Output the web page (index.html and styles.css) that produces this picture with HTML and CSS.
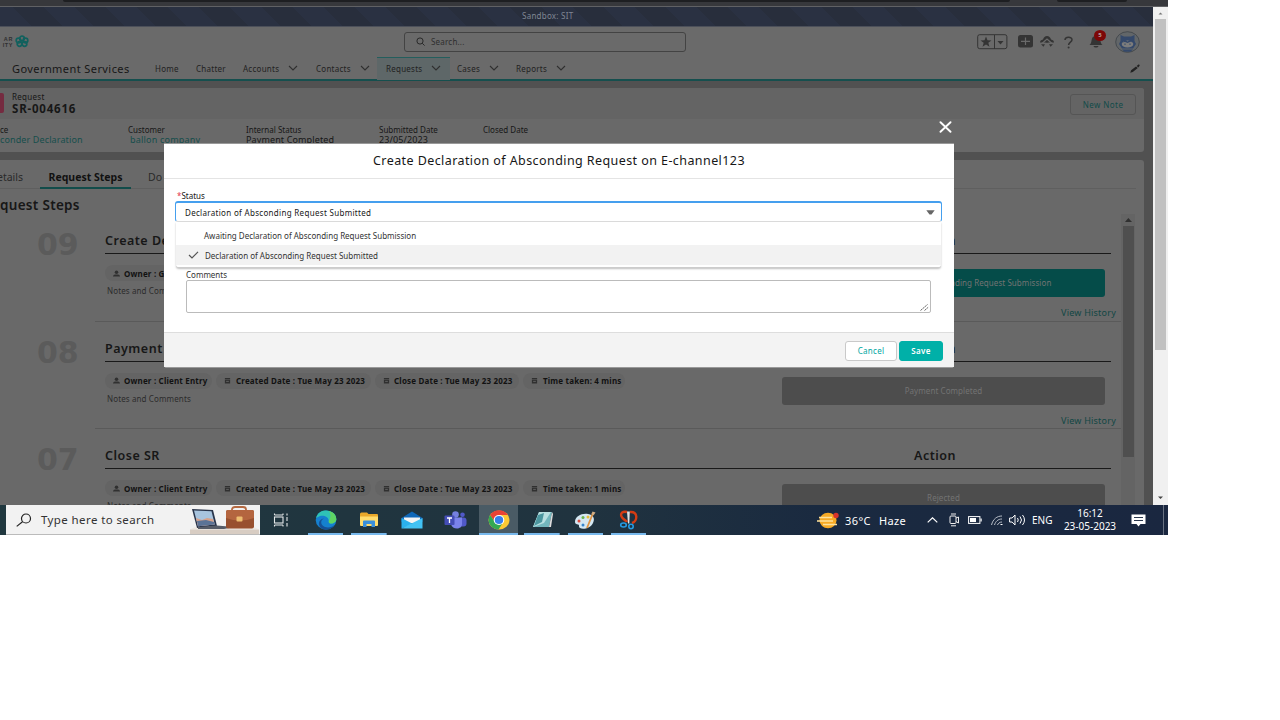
FILE: index.html
```html
<!DOCTYPE html>
<html lang="en">
<head>
    <meta charset="UTF-8">
    <meta name="viewport" content="width=device-width, initial-scale=1.0">
    <title>SR-004616 | Government Services</title>
    <link rel="stylesheet" href="styles.css">
</head>
<body>

<svg class="sprite" width="0" height="0">
    <symbol id="chevron" viewBox="0 0 10 6"><path d="M1 1l4 4 4-4" fill="none" stroke="#303030" stroke-width="1.1"/></symbol>
    <symbol id="user" viewBox="0 0 8 8"><circle cx="4" cy="2.500" r="2"/><path d="M0 7.500c0-2.500 2-2.500 4-2.500s4 0 4 2.500z"/></symbol>
    <symbol id="date" viewBox="0 0 8 8"><path d="M1 1h6v1.500H1zM1 3.200h6V7.500H1z"/><path d="M2.500 5h3" stroke="#777" stroke-width=".8"/></symbol>
</svg>

<div class="screen">
    <div class="browser-bar"><span class="address"></span><span class="profile"></span></div>

    <div class="viewport">
        <div class="app">
            <div class="sandbox"><span>Sandbox: SIT</span></div>

            <header class="header">
                <div class="logo">
                    <div class="logo-text"><span>AR</span><span>ITY</span></div>
                    <svg width="14" height="13" viewBox="0 0 14 13" fill="none" stroke="#11615e" stroke-width="1.700">
                        <circle cx="7" cy="3.500" r="2.300"/><circle cx="10.500" cy="5.500" r="2.300"/><circle cx="9.500" cy="9" r="2.300"/><circle cx="4.500" cy="9" r="2.300"/><circle cx="3.500" cy="5.500" r="2.300"/>
                    </svg>
                </div>
                <div class="search">
                    <svg width="9" height="9" viewBox="0 0 9 9" fill="none" stroke="#292929"><circle cx="4" cy="4" r="3.100"/><path d="M6.200 6.200l2.400 2.400"/></svg>
                    <span>Search...</span>
                </div>
                <div class="tools">
                    <svg width="31" height="16" viewBox="0 0 31 16">
                        <rect x=".7" y=".7" width="29.200" height="14" rx="2" fill="none" stroke="#343434"/>
                        <path d="M17.500 1v14" stroke="#343434"/>
                        <path d="M9 2.500l1.500 3.700 4 .2-3.200 2.400 1.200 4L9 10.500l-3.500 2.300 1.200-4-3.200-2.400 4-.2zM20.500 7h6l-3 3.500z" fill="#343434"/>
                    </svg>
                    <svg width="15" height="13" viewBox="0 0 15 13"><rect width="15" height="12.500" rx="2.500" fill="#343434"/><path d="M7.500 2.500v7.500M3 6.300h9" stroke="#6a6a6a" stroke-width="1.200"/></svg>
                    <svg width="14" height="13" viewBox="0 0 14 13"><path d="M0 7.500Q0 5 3 4.500 4 1 7 1t4 3.500q3 .5 3 3z" fill="#343434"/><path d="M2 8.500L7 4l5 4.500" fill="none" stroke="#6a6a6a" stroke-width="1.300"/><path d="M1 9.200h4l-1.500 2.500zM13 9.200H9l1.500 2.500zM5.500 7.500L7 6l1.500 1.500z" fill="#343434"/></svg>
                    <svg width="9" height="13" viewBox="0 0 9 13"><path d="M1 4C1 .5 8 .3 8 3.700 8 6.200 4.600 6 4.600 9" fill="none" stroke="#343434" stroke-width="1.500"/><circle cx="4.600" cy="11.500" r="1" fill="#343434"/></svg>
                    <div class="bell">
                        <svg width="14" height="13" viewBox="0 0 14 13" fill="#343434"><path d="M.5 10C3 8 2 5 3.500 2.500 5 .5 9 .5 10.500 2.500 12 5 11 8 13.500 10zM4.500 11h5c-.5 2-4.500 2-5 0z"/></svg>
                        <span class="badge">5</span>
                    </div>
                    <svg width="25" height="22" viewBox="0 0 25 22">
                        <ellipse cx="12.500" cy="11" rx="11.800" ry="10.300" fill="#626669" stroke="#3e4347" stroke-width=".8"/>
                        <path d="M5.500 4l3.500 1.500h7L19.500 4v6l1.500 3-3 4.500H7L4 13l1.500-3z" fill="#34486a"/>
                        <ellipse cx="12.500" cy="13" rx="5.800" ry="3.600" fill="#7c7c7c"/>
                        <path d="M7 11.500l3.500-2.500 2 1.500L15 9l3 2.500-2.500-.7-3 1.200-2.500-1z" fill="#34486a"/>
                        <path d="M10 12.500v1.500M15 12.500v1.500" stroke="#34486a"/>
                        <path d="M7 18.500h11l-2.500 2.300h-6z" fill="#34486a"/>
                    </svg>
                </div>
            </header>

            <nav class="nav">
                <span class="app-name">Government Services</span>
                <span class="nav-item">Home</span>
                <span class="nav-item">Chatter</span>
                <span class="nav-item">Accounts <svg width="10" height="6"><use href="#chevron"/></svg></span>
                <span class="nav-item">Contacts <svg width="10" height="6"><use href="#chevron"/></svg></span>
                <span class="nav-item active">Requests <svg width="10" height="6"><use href="#chevron"/></svg></span>
                <span class="nav-item cases">Cases <svg width="10" height="6"><use href="#chevron"/></svg></span>
                <span class="nav-item">Reports <svg width="10" height="6"><use href="#chevron"/></svg></span>
                <svg class="pencil" width="10" height="9" viewBox="0 0 10 9" fill="#222"><path d="M.3 8.700l.8-2.400L6 2.500l1.800 1.500L2.800 8zM6.700 1.900L8.400.6q1.300-.2 1.300.9L8.400 3.400z"/></svg>
            </nav>

            <main class="content">
                <section class="card record">
                    <div class="record-head">
                        <span class="record-icon"></span>
                        <div class="record-title">
                            <p>Request</p>
                            <h1>SR-004616</h1>
                        </div>
                        <span class="new-note">New Note</span>
                    </div>
                    <div class="fields">
                        <div><p>ce</p><a>conder Declaration</a></div>
                        <div><p>Customer</p><a class="company">ballon company</a></div>
                        <div><p>Internal Status</p><b>Payment Completed</b></div>
                        <div><p>Submitted Date</p><b>23/05/2023</b></div>
                        <div><p>Closed Date</p></div>
                    </div>
                </section>

                <section class="card details">
                    <div class="tabs">
                        <span class="tab first">etails</span>
                        <span class="tab selected">Request Steps</span>
                        <span class="tab">Do</span>
                    </div>
                    <h2 class="steps-title">quest Steps</h2>
                    <div class="steps">
                        <div class="step-list">
                            <article class="step">
                                <div class="number">09</div>
                                <div class="step-body">
                                    <div class="step-head"><h3>Create De</h3><h3>Action</h3></div>
                                    <div class="step-row">
                                        <div class="info">
                                            <div class="chips"><span class="chip owner"><svg width="7" height="7"><use href="#user"/></svg>Owner : G</span></div>
                                            <p class="notes">Notes and Com</p>
                                        </div>
                                        <div class="step-action">
                                            <div class="status open">Awaiting Declaration of Absconding Request Submission</div>
                                            <a>View History</a>
                                        </div>
                                    </div>
                                </div>
                            </article>
                            <article class="step">
                                <div class="number">08</div>
                                <div class="step-body">
                                    <div class="step-head"><h3>Payment</h3><h3>Action</h3></div>
                                    <div class="step-row">
                                        <div class="info">
                                            <div class="chips">
                                                <span class="chip owner"><svg width="7" height="7"><use href="#user"/></svg>Owner : Client Entry</span>
                                                <span class="chip created"><svg width="7" height="7"><use href="#date"/></svg>Created Date : Tue May 23 2023</span>
                                                <span class="chip closed"><svg width="7" height="7"><use href="#date"/></svg>Close Date : Tue May 23 2023</span>
                                                <span class="chip taken"><svg width="7" height="7"><use href="#date"/></svg>Time taken: 4 mins</span>
                                            </div>
                                            <p class="notes">Notes and Comments</p>
                                        </div>
                                        <div class="step-action">
                                            <div class="status">Payment Completed</div>
                                            <a>View History</a>
                                        </div>
                                    </div>
                                </div>
                            </article>
                            <article class="step">
                                <div class="number">07</div>
                                <div class="step-body">
                                    <div class="step-head"><h3>Close SR</h3><h3>Action</h3></div>
                                    <div class="step-row">
                                        <div class="info">
                                            <div class="chips">
                                                <span class="chip owner"><svg width="7" height="7"><use href="#user"/></svg>Owner : Client Entry</span>
                                                <span class="chip created"><svg width="7" height="7"><use href="#date"/></svg>Created Date : Tue May 23 2023</span>
                                                <span class="chip closed"><svg width="7" height="7"><use href="#date"/></svg>Close Date : Tue May 23 2023</span>
                                                <span class="chip taken"><svg width="7" height="7"><use href="#date"/></svg>Time taken: 1 mins</span>
                                            </div>
                                            <p class="notes">Notes and Comments</p>
                                        </div>
                                        <div class="step-action">
                                            <div class="status">Rejected</div>
                                        </div>
                                    </div>
                                </div>
                            </article>
                        </div>
                        <div class="inner-scroll">
                            <svg width="14" height="12" viewBox="0 0 14 12"><path d="M4 8l3.300-4L11 8z" fill="#303030"/></svg>
                            <div class="inner-thumb"></div>
                        </div>
                    </div>
                </section>
            </main>
        </div>

        <div class="page-scroll">
            <svg width="15" height="12" viewBox="0 0 15 12"><path d="M5.500 7.500l2-2 2 2z" fill="#777"/></svg>
            <div class="page-thumb"></div>
            <svg class="down" width="15" height="12" viewBox="0 0 15 12"><path d="M5 3.500h5l-2.500 2.500z" fill="#444"/></svg>
        </div>
    </div>

    <!-- Status dialog -->
    <svg class="close" width="13" height="12" viewBox="0 0 13 12" stroke="#fff" stroke-width="1.900" stroke-linecap="round"><path d="M1.500 1.200l10 9.600M11.500 1.200l-10 9.600"/></svg>
    <div class="modal">
        <div class="modal-head">Create Declaration of Absconding Request on E-channel123</div>
        <div class="modal-body">
            <p class="status-label"><i>*</i>Status</p>
            <div class="select">
                <span>Declaration of Absconding Request Submitted</span>
                <svg width="9" height="5" viewBox="0 0 9 5"><path d="M.3.300h8.400L5.500 4.500h-2z" fill="#666"/></svg>
                <div class="dropdown">
                    <div class="option">Awaiting Declaration of Absconding Request Submission</div>
                    <div class="option chosen"><svg width="11" height="8" viewBox="0 0 11 8"><path d="M1 4l3 3 6-6.200" fill="none" stroke="#555" stroke-width="1.200"/></svg>Declaration of Absconding Request Submitted</div>
                </div>
            </div>
            <p class="comments-label">Comments</p>
            <div class="textarea">
                <svg width="9" height="7" viewBox="0 0 9 7" stroke="#555" stroke-width=".9" stroke-dasharray="2 .6"><path d="M.5 6.500L7.500.5M4.500 6.500l4-3.500"/></svg>
            </div>
        </div>
        <div class="modal-foot">
            <span class="btn">Cancel</span>
            <span class="btn save">Save</span>
        </div>
    </div>

    <div class="taskbar">
        <div class="task-search">
            <svg width="16" height="14" viewBox="0 0 16 14" fill="none" stroke="#222" stroke-width="1.200"><circle cx="10" cy="5.500" r="4.500"/><path d="M6.500 8.700L.7 13.400"/></svg>
            <span>Type here to search</span>
            <svg class="art" width="70" height="29" viewBox="0 0 70 29">
                <path d="M0 24.500l4-2h61l4 2z" fill="#eee7df"/><path d="M0 24.500h69V29H0z" fill="#d8cdc3"/>
                <path d="M2 4l21 1 4 16-20 2z" fill="#29344a"/><path d="M4 5.500l17.500.8 3.300 13.200-16.800 1.700z" fill="#a8c4de"/>
                <path d="M6 13l6 2 5-2 6 1 1.500 5.500-16.500 1.700z" fill="#d7a18a"/><path d="M7 16l9-1 8 2 .8 2.500-16.800 1.700z" fill="#5b7396"/>
                <path d="M8 22l19-1.500 17 1.500-10 2H8z" fill="#565c68"/>
                <path d="M42 7V4.500C42 2.500 43.500 2 45 2h8c2 0 3 .8 3 2.500V7" fill="none" stroke="#b56a42" stroke-width="1.800"/>
                <rect x="36" y="5" width="28" height="18.500" rx="2" fill="#98502f"/><path d="M36 7q0-2 2-2h24q2 0 2 2v6q-14 5-28 0z" fill="#b4653f"/>
                <rect x="46.500" y="11.500" width="6" height="5" rx="1" fill="#edbd70"/>
            </svg>
        </div>
        <div class="task-icon view">
            <svg width="16" height="14" viewBox="0 0 16 14" fill="none" stroke="#e4e8e9" stroke-width="1.100"><rect x="1.500" y="4" width="8.500" height="6"/><path d="M1.500 2V.5M10 2V.5M1.500 2h8.500M1.500 12h8.500M1.500 12v1.500M10 12v1.500M14 .5v2M14 4v4M14 10v3.500"/></svg>
        </div>
        <div class="task-icon open">
            <svg width="22" height="20" viewBox="0 0 22 20">
                <ellipse cx="11" cy="10" rx="10.300" ry="9.500" fill="#1580cf"/>
                <path d="M1 8C3 2 7 .5 11 .5c6 0 10.300 4 10.300 8.500 0 3-3 5-6 4.500-2-.5-1.500-2-1.500-3C13.500 7 9 5 5 6z" fill="#2fc2b6"/>
                <path d="M14 1q7 2 7.300 8c0 3-3 5-6 4.500-2-.5-1.500-2-1.500-3 1-1 3-5 .2-9.500z" fill="#5fd463"/>
                <path d="M9 8.500c-5 2-3 9 4 9 3 0 5-1 6.500-2.500-2 4-9 6.500-13.500 3-4-4-2-9 3-9.500z" fill="#155097"/>
            </svg>
        </div>
        <div class="task-icon open">
            <svg width="20" height="16" viewBox="0 0 20 16"><path d="M1 2q0-1.500 1.500-1.500H8L9.500 2H18q1 0 1 1v10H1z" fill="#e9a82a"/><path d="M1 4.500h18V13q0 1-1 1H2q-1 0-1-1z" fill="#ffdc6c"/><path d="M4 15V9.500q0-1 1-1h10q1 0 1 1V15h-3.500v-3h-5v3z" fill="#398fdc"/></svg>
        </div>
        <div class="task-icon">
            <svg width="22" height="18" viewBox="0 0 22 18"><path d="M.5 7L11 .5 21.500 7v4H.5z" fill="#1068b8"/><path d="M3 6.500h16V12H3z" fill="#f4f4f4"/><path d="M.5 7L12 13 .5 17.500z" fill="#2bb1ed"/><path d="M21.500 7L.5 17.500h21z" fill="#42c2f4"/></svg>
        </div>
        <div class="task-icon">
            <svg width="23" height="18" viewBox="0 0 23 18"><circle cx="11.500" cy="3.500" r="3.300" fill="#7580df"/><circle cx="18.500" cy="3.800" r="2.300" fill="#5059c9"/><rect x="14" y="6.500" width="8.500" height="9" rx="3" fill="#5059c9"/><path d="M7 6.500h11v6.500c0 6-10 6-11 0z" fill="#7b83eb"/><rect x=".5" y="4.500" width="10" height="9.500" rx="1" fill="#444db5"/><path d="M3 7h5M5.500 7v5" stroke="#fff" stroke-width="1.300"/></svg>
        </div>
        <div class="task-icon open current">
            <svg width="22" height="20" viewBox="0 0 22 20">
                <ellipse cx="11" cy="10" rx="10.500" ry="9.500" fill="#fcc934"/>
                <path d="M2 5C6-1.500 16-1.500 20 5H11L7 12z" fill="#ea4335"/><path d="M2 5c-4 7 1 14 8.500 14.500L14 14 7 12z" fill="#34a853"/>
                <ellipse cx="11" cy="10" rx="5.300" ry="4.900" fill="#fff"/><ellipse cx="11" cy="10" rx="4.200" ry="3.900" fill="#377fea"/>
            </svg>
        </div>
        <div class="task-icon open">
            <svg width="21" height="18" viewBox="0 0 21 18"><path d="M7 1h13l-3 15H1z" fill="#72b6bd"/><path d="M7 1h12L12 12l-11 4z" fill="#b8dfe1"/><path d="M6 4l6-2-2 9-8 4z" fill="#4b969f"/><path d="M20 1l-3 15h2l2-13z" fill="#ddd"/></svg>
        </div>
        <div class="task-icon open">
            <svg width="22" height="19" viewBox="0 0 22 19"><path d="M1 11C1 5 8 2 14 3c6 1 7 5 5 9-2 5-10 7-13 5-2-1 0-3-2-3.500C2.500 13 1 13 1 11z" fill="#d4e7f2"/><circle cx="5" cy="10" r="1.500" fill="#db4c3f"/><circle cx="9" cy="6.500" r="1.500" fill="#6ab34d"/><circle cx="14" cy="6" r="1.500" fill="#e8bd38"/><circle cx="9" cy="14" r="1.500" fill="#3685cc"/><path d="M19 2l-6 15" stroke="#dc9447" stroke-width="1.800"/><path d="M17.500 3l1-2.500 3 1-2 3z" fill="#d3ad83"/></svg>
        </div>
        <div class="task-icon open">
            <svg width="19" height="20" viewBox="0 0 19 20" fill="none"><path d="M8 2C4 1 1 3 2.500 6.500 4 10 7 10 8 12M11 2c8-1 8 9 2 11" stroke="#d43c13" stroke-width="2.400"/><path d="M8 1.500h2.800l-.5 12H9z" fill="#e2e2e2"/><ellipse cx="4.500" cy="15" rx="2.800" ry="2" stroke="#259be3" stroke-width="1.600"/><ellipse cx="12" cy="16.500" rx="2.200" ry="2.200" stroke="#259be3" stroke-width="1.600"/></svg>
        </div>

        <div class="tray">
            <svg width="23" height="17" viewBox="0 0 23 17"><ellipse cx="11" cy="8.500" rx="8.500" ry="7.800" fill="#f7aa25"/><circle cx="19" cy="3.500" r="2.700" fill="#d6342b"/><path d="M2 5.500h13M0 9h16M6 12.500h14" stroke="#ffe29a" stroke-width="1.300"/></svg>
            <span class="temp">36°C</span>
            <span class="haze">Haze</span>
            <svg class="tray-up" width="11" height="6" viewBox="0 0 11 6" fill="none" stroke="#fff" stroke-width="1.200"><path d="M.7 5.400L5.500.8l4.800 4.600"/></svg>
            <svg width="12" height="14" viewBox="0 0 12 14" fill="none" stroke="#eee"><rect x="2" y="3" width="6" height="7.500" rx="1"/><path d="M3 1h5M3 12.800h5M8 5l2.500-1v6L8 8.500"/></svg>
            <svg class="battery" width="14" height="8" viewBox="0 0 14 8"><rect x=".6" y=".6" width="11.300" height="6.800" fill="none" stroke="#fff"/><path d="M2 2h6v4H2zM12.500 2.500h1.200v3h-1.200z" fill="#fff"/></svg>
            <svg class="wifi" width="12" height="11" viewBox="0 0 12 11" fill="none" stroke="#b8bec7"><path d="M.5 10C2 4 6 1 11 1M3.500 10C4.500 6.500 7 4 11 4M6.500 10c.5-1.500 2-3 4.500-3" /><path d="M9.500 9.500h2" stroke="#fff"/></svg>
            <svg class="sound" width="17" height="12" viewBox="0 0 17 12" fill="none" stroke="#fff"><path d="M.6 4h2.500L6 1v10L3.100 8H.6zM8.500 4q1.500 2 0 4M11 2.500q3 3.500 0 7M13.500 1q4 5 0 10"/></svg>
            <span class="lang">ENG</span>
            <div class="clock"><span>16:12</span><span>23-05-2023</span></div>
            <svg class="note" width="15" height="13" viewBox="0 0 15 13"><path d="M.5.500h14V10H9.500L7.500 12.500 5.500 10H.5z" fill="#fff"/><path d="M3 3.500h9M3 6.500h9" stroke="#2a374d" stroke-width="1"/></svg>
            <span class="show-desktop"></span>
        </div>
    </div>
</div>

</body>
</html>
```
FILE: styles.css
```css
* {
    box-sizing: border-box;
}
body {
    margin: 0;
    background: #fff;
    font-family: "Noto Sans", "Open Sans", sans-serif;
    font-size: 8px;
    color: #171717;
}
p, h1, h2, h3 {
    margin: 0;
}
svg {
    display: block;
    flex: none;
}
.sprite {
    position: absolute;
}
.screen {
    position: relative;
    width: 1168px;
    height: 535px;
    overflow: hidden;
    white-space: nowrap;
}
.browser-bar {
    display: flex;
    height: 7px;
    padding-left: 63px;
    background: #37383c;
    border-bottom: 1px solid #606164;
}
.address, .profile {
    width: 947px;
    height: 2px;
    background: #1e1f22;
    border-radius: 0 0 4px 4px;
}
.profile {
    width: 70px;
    margin-left: 47px;
}
.viewport {
    display: flex;
    height: 498px;
}
.app {
    width: 1153px;
    background: #515151;
    overflow: hidden;
}
.sandbox {
    height: 20px;
    padding-left: 522px;
    line-height: 18px;
    letter-spacing: .25px;
    color: #808794;
    background: repeating-linear-gradient(45deg, #2a3142 0 22px, #282e3c 22px 44px);
    border-bottom: 1px solid #4c505a;
}

/* header */
.header {
    display: flex;
    height: 29px;
    background: #6a6a6a;
}
.logo {
    display: flex;
    width: 404px;
    padding-top: 8px;
}
.logo-text {
    display: flex;
    flex-direction: column;
    align-items: flex-end;
    width: 13px;
    margin-right: 2px;
    padding-top: 1px;
    font-family: "Liberation Sans", sans-serif;
    font-size: 5.500px;
    font-weight: bold;
    line-height: 6px;
    letter-spacing: .6px;
    color: #303030;
}
.search {
    display: flex;
    align-items: center;
    width: 282px;
    height: 20px;
    margin-top: 5px;
    padding: 0 0 1px 11px;
    gap: 6px;
    border: 1px solid #434343;
    border-radius: 3px;
    color: #2e2e2e;
    letter-spacing: .2px;
}
.tools {
    display: flex;
    align-items: center;
    margin-left: 291px;
}
.tools svg:nth-child(2) {
    margin-left: 10px;
}
.tools svg:nth-child(3) {
    margin-left: 7px;
}
.tools svg:nth-child(4) {
    margin: 1px 0 0 10px;
}
.bell {
    position: relative;
    margin: 0 12px 0 16px;
}
.badge {
    position: absolute;
    top: -5px;
    left: 5px;
    width: 12px;
    height: 11px;
    border-radius: 50%;
    background: #7d0707;
    color: #b4a0a0;
    font-size: 6px;
    line-height: 11px;
    font-weight: bold;
    text-align: center;
}
.nav {
    display: grid;
    grid-template-columns: 143px 41px 47px 73px 61px 73px 66px 1fr 10px;
    height: 25px;
    padding: 1px 13px 0 12px;
    background: #6a6a6a;
    border-bottom: 2px solid #154f4e;
}
.app-name {
    font-size: 11px;
    letter-spacing: .42px;
    line-height: 23px;
}
.nav-item {
    display: flex;
    align-items: center;
    gap: 9px;
    padding-bottom: 1px;
    color: #222;
    letter-spacing: .25px;
}
.nav-item.active {
    padding: 0 0 2px 9px;
    background: #5e6768;
    border-top: 1px solid #245e5d;
}
.nav-item.cases {
    padding-left: 7px;
}
.pencil {
    align-self: center;
}

/* record */
.content {
    padding-top: 7px;
}
.card {
    width: 1144px;
    background: #696969;
    border-radius: 0 3px 3px 0;
}
.record {
    height: 64px;
}
.record-head {
    display: flex;
    height: 31px;
    background: #646464;
    border-radius: 0 3px 0 0;
}
.record-icon {
    width: 4px;
    height: 20px;
    margin-top: 5px;
    background: #752b40;
    border-radius: 0 2px 2px 0;
}
.record-title {
    flex: 1;
    padding: 4px 0 0 8px;
}
.record-title p {
    height: 10px;
    line-height: 10px;
    letter-spacing: .3px;
}
.record-title h1 {
    font-size: 11.500px;
    line-height: 13px;
    letter-spacing: .8px;
}
.new-note {
    width: 66px;
    height: 21px;
    margin: 6px 8px 0 0;
    border: 1px solid #555;
    border-radius: 3px;
    color: #124b49;
    font-size: 8px;
    letter-spacing: .45px;
    line-height: 19px;
    text-align: center;
}
.fields {
    display: grid;
    grid-template-columns: 128px 118px 133px 104px 1fr;
    padding-top: 5px;
    line-height: 11px;
}
.fields a, .fields b {
    display: block;
    font-size: 9px;
    font-weight: normal;
    line-height: 10px;
    letter-spacing: .12px;
}
.fields a {
    color: #164e4c;
}
.fields .company {
    padding-left: 2px;
    letter-spacing: .2px;
}

/* tabs */
.details {
    height: 345px;
    margin-top: 8px;
    border-radius: 0 3px 0 0;
}
.tabs {
    display: flex;
    width: 1136px;
    height: 29px;
    padding-top: 5px;
    border-bottom: 1px solid #5f5f5f;
    font-size: 10.500px;
    line-height: 24px;
    color: #292929;
}
.tab.first {
    width: 43px;
    margin-left: -3px;
}
.tab.selected {
    width: 91px;
    height: 24px;
    margin-right: 17px;
    font-weight: bold;
    color: #111;
    text-align: center;
    border-bottom: 2px solid #124c4a;
}
.steps-title {
    height: 25px;
    font-size: 13.500px;
    font-weight: 600;
    line-height: 32px;
    letter-spacing: .3px;
}
.steps {
    display: flex;
    height: 291px;
    overflow: hidden;
}
.step-list {
    width: 1121px;
}
.step {
    display: flex;
    height: 107.700px;
}
.number {
    width: 95px;
    padding-left: 37px;
    font-family: "DejaVu Sans", sans-serif;
    font-size: 30px;
    font-weight: bold;
    line-height: 62px;
    color: #5b5b5b;
}
.step-body {
    flex: 1;
    padding-left: 10px;
    border-bottom: 1px solid #5a5a5a;
}
.step-head {
    display: flex;
    width: 1006px;
    height: 40px;
    padding-top: 16px;
    border-bottom: 1px solid #191919;
}
.step-head h3 {
    flex: none;
    width: 809px;
    font-size: 12.500px;
    font-weight: 600;
    line-height: 21px;
    letter-spacing: .5px;
}
.step-row {
    display: flex;
}
.info {
    width: 677px;
    padding-top: 11px;
}
.chips {
    display: flex;
    gap: 4px;
}
.chip {
    display: flex;
    align-items: center;
    gap: 4px;
    height: 16px;
    padding-left: 8px;
    border-radius: 9px;
    background: #646464;
    font-weight: bold;
    font-size: 8px;
    letter-spacing: .18px;
    color: #121212;
}
.chip svg {
    fill: #303030;
}
.owner {
    width: 107px;
}
.created {
    width: 155px;
}
.created svg {
    margin-right: 1px;
}
.closed {
    width: 144px;
}
.taken {
    width: 102px;
}
.taken svg {
    margin-right: 1px;
}
.notes {
    padding: 4px 0 0 2px;
    line-height: 12px;
    letter-spacing: .12px;
    color: #2c2c2c;
}
.step-action {
    display: flex;
    flex-direction: column;
    width: 334px;
    padding-top: 15px;
}
.status {
    width: 323px;
    height: 28px;
    border-radius: 3px;
    background: #4d4d4d;
    color: #737373;
    line-height: 27px;
    letter-spacing: .07px;
    text-align: center;
}
.status.open {
    background: #054c49;
}
.step-action a {
    align-self: flex-end;
    padding-top: 8px;
    font-size: 9px;
    line-height: 15px;
    letter-spacing: .22px;
    color: #124744;
}
.inner-scroll {
    width: 14px;
    background: #646464;
}
.inner-thumb {
    width: 11px;
    height: 231px;
    margin-left: 2px;
    background: #4f4f4f;
}
.page-scroll {
    display: flex;
    flex-direction: column;
    align-items: center;
    width: 15px;
    background: #f0f0f0;
}
.page-thumb {
    width: 11px;
    height: 331px;
    background: #c1c1c1;
}
.page-scroll .down {
    margin-top: auto;
}

/* dialog */
.close {
    position: absolute;
    top: 121px;
    left: 939px;
}
.modal {
    position: absolute;
    top: 143px;
    left: 164px;
    width: 790px;
    height: 225px;
    background: #fff;
    border-radius: 0 0 3px 3px;
    border-bottom: 1px solid #999;
    border-top: 1px solid #999;
}
.modal-head {
    height: 35px;
    border-bottom: 1px solid #e4e4e4;
    font-size: 12.500px;
    line-height: 34px;
    letter-spacing: .42px;
    text-align: center;
}
.modal-body {
    height: 154px;
    padding: 11px 12px 0 11px;
    border-bottom: 1px solid #ddd;
}
.status-label {
    height: 11px;
    padding-left: 2px;
    font-size: 8px;
    line-height: 11px;
}
.status-label i {
    font-style: normal;
    color: #e3354d;
}
.select {
    position: relative;
    display: flex;
    align-items: center;
    justify-content: space-between;
    height: 21px;
    padding: 0 6px 0 9px;
    border: 1px solid #459fee;
    border-top-width: 2px;
    border-bottom-color: #ddd;
    border-radius: 3px;
    letter-spacing: .31px;
}
.dropdown {
    position: absolute;
    top: 19px;
    left: 0;
    right: 0;
    height: 46px;
    padding-top: 3px;
    background: #fff;
    border-bottom: 1px solid #ccc;
    border-radius: 0 0 3px 3px;
    box-shadow: 0 1px 2px rgba(0, 0, 0, .25);
    letter-spacing: 0;
}
.option {
    display: flex;
    align-items: center;
    height: 20px;
    padding-left: 28px;
    color: #333;
}
.option.chosen {
    gap: 6px;
    padding-left: 12px;
    background: #f2f2f2;
}
.comments-label {
    padding: 47px 0 0 11px;
    line-height: 11px;
    color: #333;
}
.textarea {
    display: flex;
    align-items: flex-end;
    justify-content: flex-end;
    width: 745px;
    height: 33px;
    margin: 0 0 0 11px;
    padding: 1px;
    border: 1px solid #bbb;
    border-radius: 2px;
}
.modal-foot {
    display: flex;
    justify-content: flex-end;
    gap: 2px;
    height: 34px;
    padding: 8px 11px 0 0;
    background: #f3f3f3;
}
.btn {
    width: 52px;
    height: 20px;
    border: 1px solid #c9c9c9;
    border-radius: 3px;
    background: #fff;
    color: #00a69f;
    letter-spacing: .3px;
    line-height: 18px;
    text-align: center;
}
.btn.save {
    width: 44px;
    border-color: #00b0a8;
    background: #00b0a8;
    color: #fff;
    font-weight: 600;
}

/* taskbar */
.taskbar {
    display: flex;
    height: 30px;
    padding-left: 6px;
    background: linear-gradient(90deg, #20383f, #20333f 50%, #1a2a40 70%, #1a2740);
}
.task-search {
    display: flex;
    align-items: center;
    width: 254px;
    padding-left: 10px;
    background: #f2f2f2;
    border-bottom: 1px solid #bbb;
    font-size: 11.500px;
    letter-spacing: .4px;
    color: #333;
}
.task-search span {
    flex: 1;
    padding-left: 9px;
}
.task-icon {
    display: flex;
    align-items: center;
    justify-content: center;
    width: 43.300px;
    height: 30px;
    border: solid transparent;
    border-width: 0 4px;
}
.task-icon.view {
    width: 44px;
    padding-right: 3px;
}
.task-icon.open {
    background: linear-gradient(#78b9ed, #78b9ed) bottom / 100% 2px no-repeat padding-box;
}
.task-icon.current {
    border-width: 0 2px;
    background: linear-gradient(#78b9ed, #78b9ed) bottom / 100% 2px no-repeat padding-box, #4a5b65 padding-box;
}
.tray {
    display: flex;
    align-items: center;
    margin-left: auto;
    width: 351px;
    color: #fff;
    font-size: 11px;
}
.temp {
    width: 34px;
    margin-left: 5px;
    letter-spacing: .4px;
}
.haze {
    width: 48px;
    letter-spacing: .3px;
}
.tray-up {
    margin-right: 10px;
}
.battery {
    margin-left: 8px;
}
.wifi {
    margin-left: 9px;
}
.sound {
    margin-left: 6px;
}
.lang {
    width: 25px;
    margin-left: 6px;
    font-size: 10px;
}
.clock {
    display: flex;
    flex-direction: column;
    width: 60px;
    margin-left: 3px;
    font-size: 10px;
    line-height: 13px;
    text-align: center;
}
.note {
    margin-left: 11px;
}
.show-desktop {
    height: 30px;
    margin-left: 17px;
    border-left: 1px solid #687181;
}
```
